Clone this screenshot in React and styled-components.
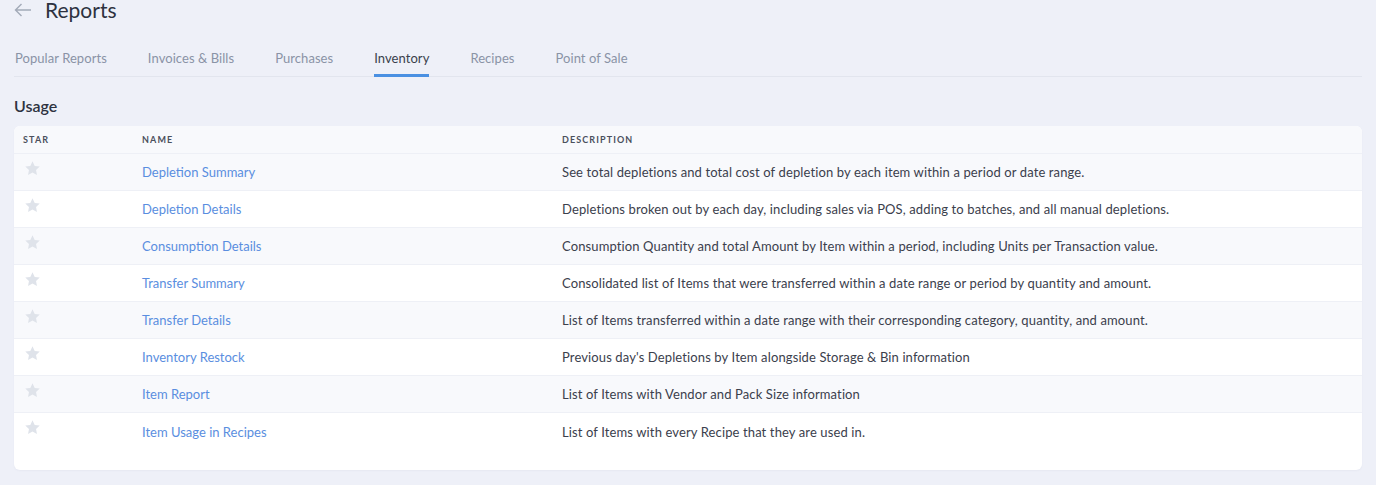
import React from "react";
import styled, { createGlobalStyle } from "styled-components";

const GlobalStyle = createGlobalStyle`
  html, body {
    margin: 0;
    padding: 0;
    background: #eef0f8;
    font-family: Lato, "Noto Sans", sans-serif;
  }
`;

const Page = styled.div`
  padding: 0 14px 0 14px;
  width: 1348px;
  height: 485px;
  overflow: hidden;
`;

const Header = styled.div`
  display: flex;
  align-items: center;
  gap: 13px;
  height: 20px;
  margin-top: 0;
`;

const BackArrow = styled.svg`
  width: 18px;
  height: 14px;
  color: #a3aab8;
`;

const Title = styled.h1`
  margin: 0;
  font-size: 21px;
  font-weight: 400;
  color: #2d3240;
  line-height: 20px;
`;

const Tabs = styled.div`
  display: flex;
  gap: 41px;
  margin-top: 28px;
  padding-left: 1px;
  border-bottom: 1px solid #e2e5ee;
`;

const Tab = styled.div`
  font-size: 13px;
  letter-spacing: 0.06px;
  color: ${(p) => (p.active ? "#3a3f4c" : "#8a93a6")};
  padding: 2px 0 8px;
  border-bottom: 3px solid ${(p) => (p.active ? "#4a90e2" : "transparent")};
  margin-bottom: -1px;
  line-height: 16px;
`;

const SectionTitle = styled.h2`
  margin: 19px 0 10px;
  font-size: 16px;
  font-weight: 600;
  color: #2d3240;
  line-height: 20px;
`;

const Card = styled.div`
  background: #fff;
  border-radius: 6px;
  padding-bottom: 20px;
  overflow: hidden;
  box-shadow: 0 1px 2px rgba(40, 50, 90, 0.04);
`;

const Row = styled.div`
  display: grid;
  grid-template-columns: 128px 420px 1fr;
  align-items: center;
  height: ${(p) => (p.head ? "28px" : "37px")};
  background: ${(p) => (p.shade ? "#f8f9fc" : "#fff")};
  border-bottom: 1px solid #eef0f6;
  box-sizing: border-box;
  &:last-child {
    border-bottom: none;
  }
`;

const HeadCell = styled.div`
  font-size: 9px;
  font-weight: 700;
  letter-spacing: 1.1px;
  color: #4b505c;
  padding-left: ${(p) => (p.first ? "9px" : "0")};
`;

const StarCell = styled.div`
  padding-left: 10px;
  align-self: start;
  padding-top: 6px;
`;

const StarIcon = styled.svg`
  width: 17px;
  height: 17px;
  display: block;
`;

const NameLink = styled.a`
  font-size: 13px;
  color: #5a8ee0;
  text-decoration: none;
`;

const Desc = styled.div`
  font-size: 13px;
  letter-spacing: 0.12px;
  color: #3b404c;
`;

const reports = [
  ["Depletion Summary", "See total depletions and total cost of depletion by each item within a period or date range."],
  ["Depletion Details", "Depletions broken out by each day, including sales via POS, adding to batches, and all manual depletions."],
  ["Consumption Details", "Consumption Quantity and total Amount by Item within a period, including Units per Transaction value."],
  ["Transfer Summary", "Consolidated list of Items that were transferred within a date range or period by quantity and amount."],
  ["Transfer Details", "List of Items transferred within a date range with their corresponding category, quantity, and amount."],
  ["Inventory Restock", "Previous day's Depletions by Item alongside Storage & Bin information"],
  ["Item Report", "List of Items with Vendor and Pack Size information"],
  ["Item Usage in Recipes", "List of Items with every Recipe that they are used in."],
];

const tabs = ["Popular Reports", "Invoices & Bills", "Purchases", "Inventory", "Recipes", "Point of Sale"];

function Star() {
  return (
    <StarIcon viewBox="0 0 24 24">
      <path
        d="M12 1.8l3.1 6.6 7.1.9-5.2 4.9 1.3 7.1L12 17.8l-6.3 3.5 1.3-7.1L1.8 9.3l7.1-.9z"
        fill="#dfe3ea"
      />
    </StarIcon>
  );
}

export default function App() {
  return (
    <>
      <GlobalStyle />
      <Page>
        <Header>
          <BackArrow viewBox="0 0 18 14" fill="none" stroke="currentColor" strokeWidth="1.4">
            <path d="M17 7H1.5M7.5 1L1.5 7l6 6" />
          </BackArrow>
          <Title>Reports</Title>
        </Header>
        <Tabs>
          {tabs.map((t) => (
            <Tab key={t} active={t === "Inventory"}>
              {t}
            </Tab>
          ))}
        </Tabs>
        <SectionTitle>Usage</SectionTitle>
        <Card>
          <Row head shade>
            <HeadCell first>STAR</HeadCell>
            <HeadCell>NAME</HeadCell>
            <HeadCell>DESCRIPTION</HeadCell>
          </Row>
          {reports.map(([name, desc], i) => (
            <Row key={name} shade={i % 2 === 0}>
              <StarCell>
                <Star />
              </StarCell>
              <NameLink href="#">{name}</NameLink>
              <Desc>{desc}</Desc>
            </Row>
          ))}
        </Card>
      </Page>
    </>
  );
}
